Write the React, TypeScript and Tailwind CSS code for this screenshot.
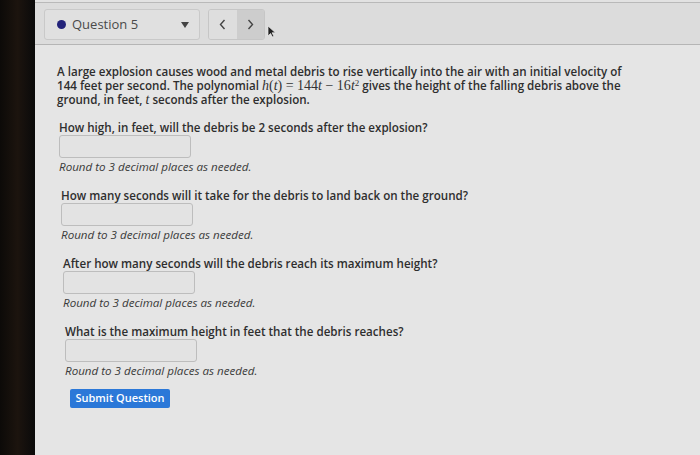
import React from "react";

const FONT = { fontFamily: '"Open Sans", "Liberation Sans", sans-serif' };
const MATH = { fontFamily: '"Liberation Serif", serif' };

const QUESTIONS = [
  "How high, in feet, will the debris be 2 seconds after the explosion?",
  "How many seconds will it take for the debris to land back on the ground?",
  "After how many seconds will the debris reach its maximum height?",
  "What is the maximum height in feet that the debris reaches?",
];

function Part({ q, shift }: { q: string; shift: string }) {
  return (
    <div className={shift}>
      <p className="text-[11.6px] font-semibold leading-[14px] text-[#2e2e2e]">{q}</p>
      <div className="h-[23px] w-[132px] rounded-[3px] border border-[#bdbdbd] bg-[#e3e3e3]" />
      <p className="mt-[2px] text-[11.6px] italic leading-[14px] text-[#3a3a3a]">Round to 3 decimal places as needed.</p>
    </div>
  );
}

export default function App() {
  return (
    <div className="flex h-[455px] w-[700px] overflow-hidden bg-[#e5e5e5]" style={FONT}>
      <div className="w-[35px] shrink-0 bg-gradient-to-r from-[#0c0a08] via-[#1c140e] to-[#0a0a0a]" />
      <div className="flex min-w-0 flex-1 flex-col">
        <div className="h-[3px] border-b border-[#b9b9b9] bg-[#e2e2e2]" />
        <div className="flex h-[42px] items-start gap-[8px] border-b border-[#b5b5b5] bg-[#dcdcdc] pl-[9px] pt-[6px]">
          <div className="flex h-[31px] w-[156px] items-center rounded-[3px] border border-[#c9c9c9] bg-[#e0e0e0] pl-[12px] pr-[10px]">
            <span className="h-[9px] w-[9px] rounded-full bg-[#23237a]" />
            <span className="ml-[6px] flex-1 text-[13px] text-[#4a4a4a]">Question 5</span>
            <svg width="8" height="6" viewBox="0 0 8 6"><path d="M0 0h8L4 6z" fill="#444" /></svg>
          </div>
          <div className="flex h-[31px] w-[57px] overflow-hidden rounded-[3px] border border-[#c6c6c6]">
            <div className="flex flex-1 items-center justify-center bg-[#dedede]">
              <svg width="7" height="11" viewBox="0 0 7 11"><path d="M5.5 1L1.5 5.5 5.5 10" stroke="#444" strokeWidth="1.4" fill="none" /></svg>
            </div>
            <div className="flex flex-1 items-center justify-center bg-[#cdcdcd]">
              <svg width="7" height="11" viewBox="0 0 7 11"><path d="M1.5 1l4 4.5-4 4.5" stroke="#444" strokeWidth="1.4" fill="none" /></svg>
            </div>
          </div>
          <svg className="-ml-[6px] mt-[16px]" width="9" height="13" viewBox="0 0 9 13">
            <path d="M1 1v10l2.5-2.5 2 3.5 1.5-.8-2-3.4H8.5z" fill="#222" stroke="#eee" strokeWidth="0.7" />
          </svg>
        </div>
        <div className="flex flex-col pl-[22px] pr-[20px] pt-[20px]">
          <div className="text-[11.6px] font-semibold leading-[14px] text-[#2e2e2e]">
            <div className="h-[14px] whitespace-nowrap">
              A large explosion causes wood and metal debris to rise vertically into the air with an initial velocity of
            </div>
            <div className="h-[14px] whitespace-nowrap">
              144 feet per second. The polynomial{" "}
              <span className="text-[14px] font-normal leading-none text-[#333]" style={MATH}>
                <i>h</i>(<i>t</i>) = 144<i>t</i> − 16<i>t</i><sup className="text-[9px]">2</sup>
              </span>{" "}
              gives the height of the falling debris above the
            </div>
            <div className="h-[14px] whitespace-nowrap">
              ground, in feet, <i className="text-[14px] font-normal leading-none" style={MATH}>t</i> seconds after the explosion.
            </div>
          </div>
          <div className="mt-[14px] flex flex-col gap-[15px]">
            <Part q={QUESTIONS[0]} shift="ml-[2px]" />
            <Part q={QUESTIONS[1]} shift="ml-[4px]" />
            <Part q={QUESTIONS[2]} shift="ml-[6px]" />
            <Part q={QUESTIONS[3]} shift="ml-[8px]" />
          </div>
          <button className="ml-[13px] mt-[11px] h-[19px] w-[100px] rounded-[2px] bg-[#2b78d8] text-[11px] font-semibold text-white">
            Submit Question
          </button>
        </div>
      </div>
    </div>
  );
}
